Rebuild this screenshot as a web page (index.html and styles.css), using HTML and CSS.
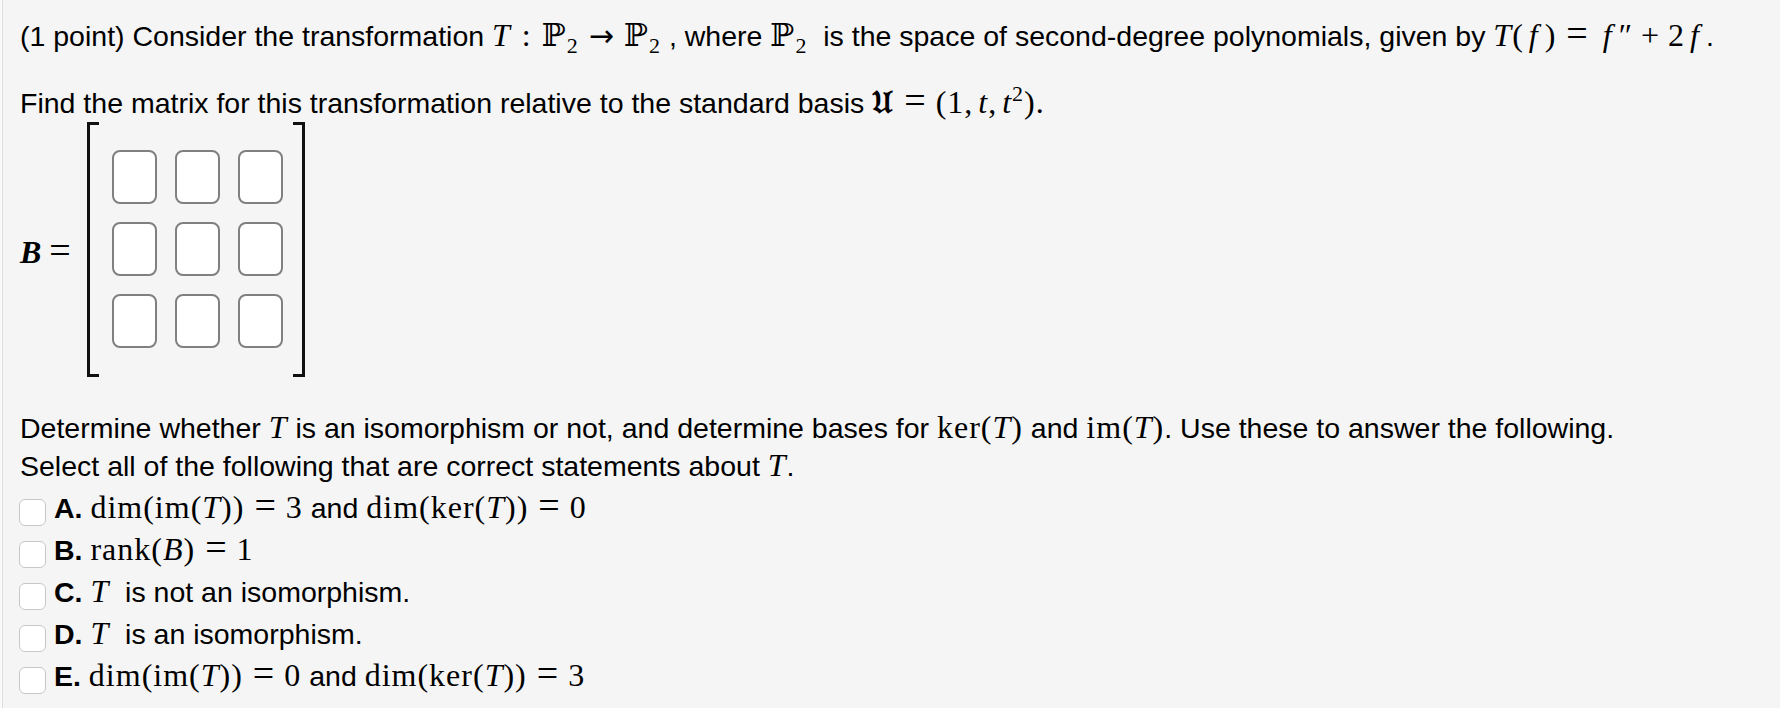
FILE: index.html
```html
<!DOCTYPE html>
<html lang="en">
<head>
    <meta charset="UTF-8">
    <title>Linear transformation problem</title>
    <link rel="stylesheet" href="styles.css">
</head>
<body>
    <div class="problem">
        <!-- statement -->
        <p class="line intro">(1 point) Consider the transformation <span class="m"><i>T</i><span class="rel">:</span><span class="bb">ℙ</span><sub>2</sub><span class="rel arrow">→</span><span class="bb">ℙ</span><sub>2</sub></span> , where <span class="m"><span class="bb">ℙ</span><sub>2</sub></span>&nbsp; is the space of second-degree polynomials, given by <span class="m"><i>T</i>(<i class="f">f</i>)<span class="rel eq">=</span><i class="f">f</i>″<span class="bin">+</span>2<i class="f">f</i></span>.</p>

        <p class="line">Find the matrix for this transformation relative to the standard basis <span class="m"><span class="frak">𝔘</span><span class="rel eq">=</span>(1,<span class="thin"></span><i>t</i>,<span class="thin"></span><i>t</i><sup>2</sup>).</span></p>

        <!-- answer matrix -->
        <div class="matrix-row">
            <span class="lhs"><b>B</b><span class="rel eq">=</span></span>
            <div class="matrix">
                <input class="cell" type="text">
                <input class="cell" type="text">
                <input class="cell" type="text">
                <input class="cell" type="text">
                <input class="cell" type="text">
                <input class="cell" type="text">
                <input class="cell" type="text">
                <input class="cell" type="text">
                <input class="cell" type="text">
            </div>
        </div>

        <p class="line after-matrix">Determine whether <span class="m"><i>T</i></span> is an isomorphism or not, and determine bases for <span class="m">ker(<i>T</i>)</span> and <span class="m">im(<i>T</i>)</span>. Use these to answer the following.</p>
        <p class="line">Select all of the following that are correct statements about <span class="m"><i>T</i></span>.</p>

        <!-- choices -->
        <div class="choices">
            <div class="opt"><input class="box" type="checkbox"><b>A.</b> <span class="m">dim(im(<i>T</i>))<span class="rel eq">=</span>3</span> and <span class="m">dim(ker(<i>T</i>))<span class="rel eq">=</span>0</span></div>
            <div class="opt"><input class="box" type="checkbox"><b>B.</b> <span class="m">rank(<i>B</i>)<span class="rel eq">=</span>1</span></div>
            <div class="opt"><input class="box" type="checkbox"><b>C.</b> <span class="m"><i>T</i></span>&nbsp; is not an isomorphism.</div>
            <div class="opt"><input class="box" type="checkbox"><b>D.</b> <span class="m"><i>T</i></span>&nbsp; is an isomorphism.</div>
            <div class="opt"><input class="box" type="checkbox"><b>E.</b> <span class="m">dim(im(<i>T</i>))<span class="rel eq">=</span>0</span> and <span class="m">dim(ker(<i>T</i>))<span class="rel eq">=</span>3</span></div>
        </div>
    </div>
</body>
</html>
```

FILE: styles.css
```css
/* problem page */
body {
    margin: 0;
    background: #fafafa;
    font-family: "Liberation Sans", Arial, Helvetica, sans-serif;
    font-size: 28.5px;
    color: #000;
    overflow: hidden;
}
.problem {
    margin-left: 2px;
    border-left: 1px solid #dedede;
    background: #f5f5f5;
    padding: 17px 0 0 17px;
    height: 708px;
    box-sizing: border-box;
}
.line {
    margin: 0;
    line-height: 38px;
    white-space: nowrap;
}
.intro {
    margin-bottom: 29px;
}
.after-matrix {
    margin-top: 32px;
}

/* math */
.m {
    font-family: "Liberation Serif", "DejaVu Serif", serif;
    font-size: 32px;
    line-height: 1;
    letter-spacing: 1px;
}
.m i {
    font-style: italic;
}
.m i.f {
    margin: 0 6px 0 5px;
}
.m sub, .m sup {
    font-size: 22px;
    line-height: 0;
}
.bb {
    font-family: "DejaVu Serif", serif;
    font-weight: normal;
}
.rel {
    margin: 0 11px;
    letter-spacing: 0;
}
.rel.eq {
    font-size: 38px;
    line-height: 0;
    margin: 0 10px;
}
.rel.arrow {
    font-family: "DejaVu Sans", sans-serif;
    font-size: 30px;
    margin: 0 10px;
}
.bin {
    margin: 0 8px;
}
.thin {
    display: inline-block;
    width: 5px;
}
.frak {
    font-family: "DejaVu Serif", "DejaVu Sans", serif;
    font-weight: bold;
}

/* matrix */
.matrix-row {
    display: flex;
    align-items: center;
    height: 255px;
}
.lhs {
    font-family: "Liberation Serif", serif;
    font-size: 32px;
    line-height: 1;
    padding-top: 4px;
}
.lhs b {
    font-style: italic;
}
.lhs .rel.eq {
    margin: 0 0 0 8px;
}
.matrix {
    margin-left: 16px;
    display: grid;
    grid-template-columns: repeat(3, 45px);
    grid-auto-rows: 54px;
    column-gap: 18px;
    row-gap: 18px;
    padding: 28px 19px 29px 22px;
    border-left: 3px solid #111;
    border-right: 3px solid #111;
    background:
        linear-gradient(#111, #111) left top / 12px 3px no-repeat,
        linear-gradient(#111, #111) left bottom / 12px 3px no-repeat,
        linear-gradient(#111, #111) right top / 12px 3px no-repeat,
        linear-gradient(#111, #111) right bottom / 12px 3px no-repeat;
    background-origin: border-box;
}
.cell {
    width: 45px;
    height: 54px;
    margin: 0;
    box-sizing: border-box;
    border: 2px solid #808080;
    border-radius: 8px;
    background: #fff;
}

/* choices */
.choices {
    padding-top: 2px;
}
.opt {
    line-height: 42px;
    white-space: nowrap;
}
.box {
    appearance: none;
    display: inline-block;
    width: 27px;
    height: 27px;
    margin: 0 8px 0 -1px;
    vertical-align: -8px;
    box-sizing: border-box;
    border: 1px solid #c8c8c8;
    border-radius: 6px;
    background: #fff;
}
```
